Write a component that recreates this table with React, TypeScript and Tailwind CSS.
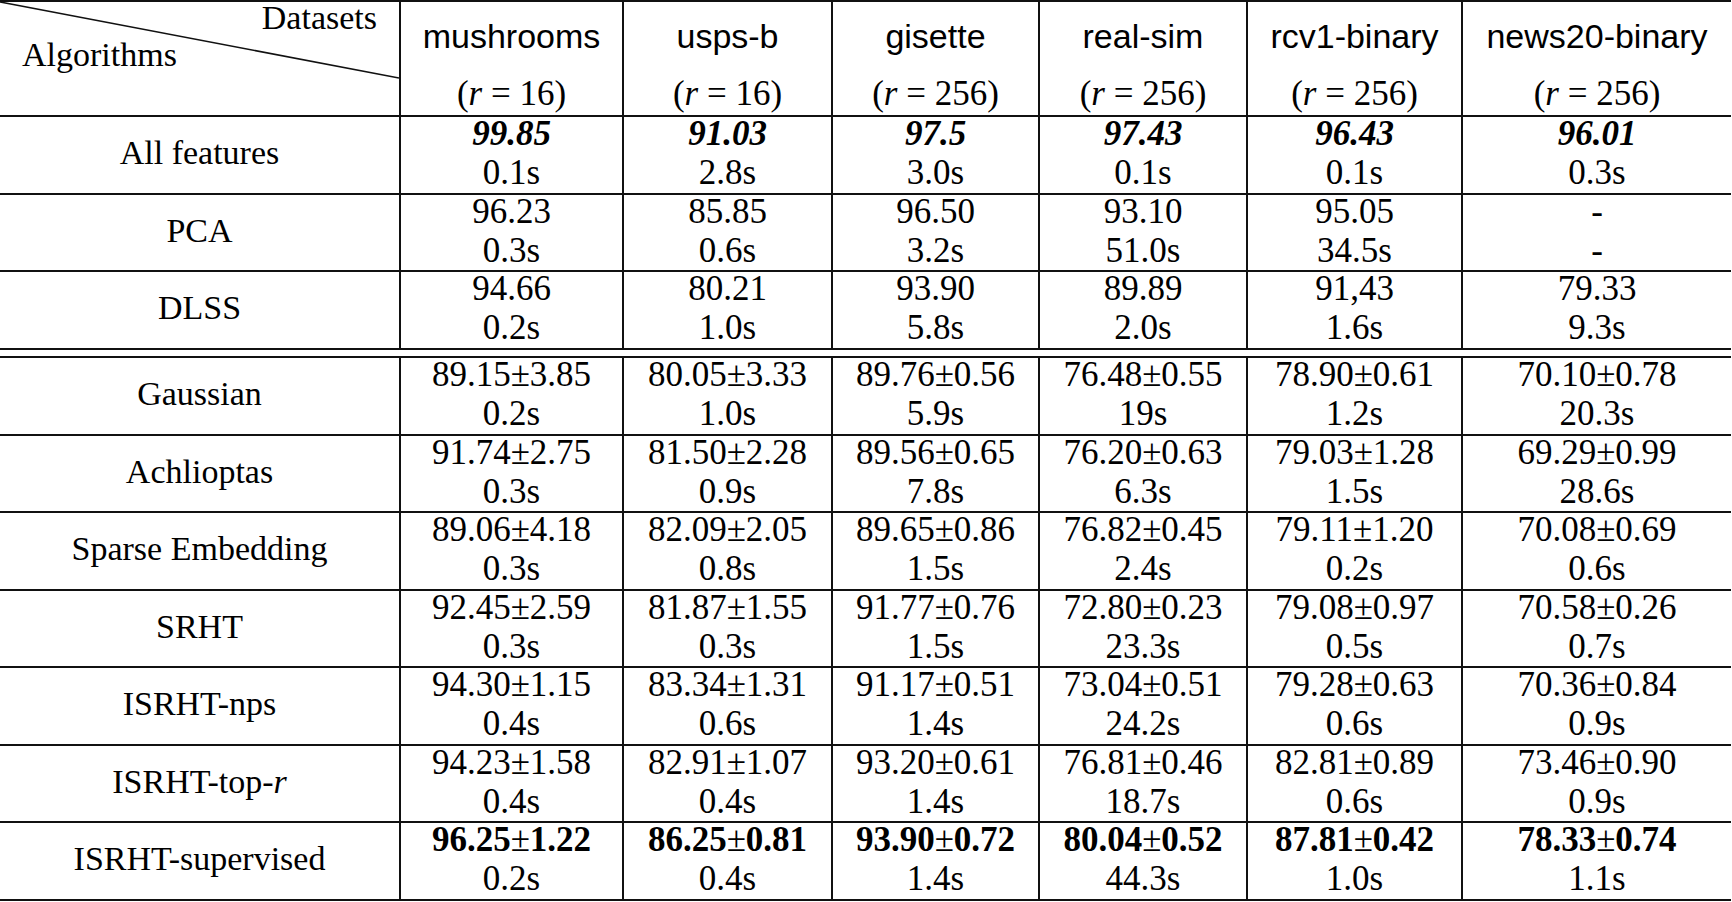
import React from "react";

type Cell = { v: string; t: string };

const datasets = [
  { name: "mushrooms", r: "16" },
  { name: "usps-b", r: "16" },
  { name: "gisette", r: "256" },
  { name: "real-sim", r: "256" },
  { name: "rcv1-binary", r: "256" },
  { name: "news20-binary", r: "256" },
];

const c = (v: string, t: string): Cell => ({ v, t });

const topRows: { name: string; cells: Cell[]; best?: boolean }[] = [
  {
    name: "All features",
    best: true,
    cells: [c("99.85", "0.1s"), c("91.03", "2.8s"), c("97.5", "3.0s"), c("97.43", "0.1s"), c("96.43", "0.1s"), c("96.01", "0.3s")],
  },
  {
    name: "PCA",
    cells: [c("96.23", "0.3s"), c("85.85", "0.6s"), c("96.50", "3.2s"), c("93.10", "51.0s"), c("95.05", "34.5s"), c("-", "-")],
  },
  {
    name: "DLSS",
    cells: [c("94.66", "0.2s"), c("80.21", "1.0s"), c("93.90", "5.8s"), c("89.89", "2.0s"), c("91,43", "1.6s"), c("79.33", "9.3s")],
  },
];

const bottomRows: { name: React.ReactNode; cells: Cell[]; bold?: boolean }[] = [
  {
    name: "Gaussian",
    cells: [c("89.15±3.85", "0.2s"), c("80.05±3.33", "1.0s"), c("89.76±0.56", "5.9s"), c("76.48±0.55", "19s"), c("78.90±0.61", "1.2s"), c("70.10±0.78", "20.3s")],
  },
  {
    name: "Achlioptas",
    cells: [c("91.74±2.75", "0.3s"), c("81.50±2.28", "0.9s"), c("89.56±0.65", "7.8s"), c("76.20±0.63", "6.3s"), c("79.03±1.28", "1.5s"), c("69.29±0.99", "28.6s")],
  },
  {
    name: "Sparse Embedding",
    cells: [c("89.06±4.18", "0.3s"), c("82.09±2.05", "0.8s"), c("89.65±0.86", "1.5s"), c("76.82±0.45", "2.4s"), c("79.11±1.20", "0.2s"), c("70.08±0.69", "0.6s")],
  },
  {
    name: "SRHT",
    cells: [c("92.45±2.59", "0.3s"), c("81.87±1.55", "0.3s"), c("91.77±0.76", "1.5s"), c("72.80±0.23", "23.3s"), c("79.08±0.97", "0.5s"), c("70.58±0.26", "0.7s")],
  },
  {
    name: "ISRHT-nps",
    cells: [c("94.30±1.15", "0.4s"), c("83.34±1.31", "0.6s"), c("91.17±0.51", "1.4s"), c("73.04±0.51", "24.2s"), c("79.28±0.63", "0.6s"), c("70.36±0.84", "0.9s")],
  },
  {
    name: (
      <>
        ISRHT-top-<i>r</i>
      </>
    ),
    cells: [c("94.23±1.58", "0.4s"), c("82.91±1.07", "0.4s"), c("93.20±0.61", "1.4s"), c("76.81±0.46", "18.7s"), c("82.81±0.89", "0.6s"), c("73.46±0.90", "0.9s")],
  },
  {
    name: "ISRHT-supervised",
    bold: true,
    cells: [c("96.25±1.22", "0.2s"), c("86.25±0.81", "0.4s"), c("93.90±0.72", "1.4s"), c("80.04±0.52", "44.3s"), c("87.81±0.42", "1.0s"), c("78.33±0.74", "1.1s")],
  },
];

const grid = "grid grid-cols-[399px_223px_209px_207px_208px_215px_270px] border-b-2 border-[#111]";
const cellBorder = "border-l-2 border-[#111]";

function BoldPm({ v }: { v: string }) {
  const [a, b] = v.split("±");
  if (b === undefined) return <span className="font-bold">{v}</span>;
  return (
    <>
      <span className="font-bold">{a}</span>±<span className="font-bold">{b}</span>
    </>
  );
}

function ValueCell({ cell, mode }: { cell: Cell; mode?: "bi" | "b" }) {
  return (
    <div className={`${cellBorder} flex flex-col items-center text-[35px] leading-[39px] whitespace-nowrap`}>
      <div className="-mt-[3px]">
        {mode === "bi" ? (
          <span className="font-bold italic">{cell.v}</span>
        ) : mode === "b" ? (
          <BoldPm v={cell.v} />
        ) : (
          cell.v
        )}
      </div>
      <div>{cell.t}</div>
    </div>
  );
}

function NameCell({ children }: { children: React.ReactNode }) {
  return (
    <div className="flex items-center justify-center pb-[4px] text-[34px] leading-[38px] whitespace-nowrap">{children}</div>
  );
}

export default function App() {
  return (
    <div
      className="w-[1731px] bg-white text-black"
      style={{ fontFamily: '"Liberation Serif", "Times New Roman", serif' }}
    >
      <div className="border-t-2 border-[#111]">
        {/* header */}
        <div className={`${grid} h-[115px]`}>
          <div className="relative flex flex-col text-[34px] leading-[34px]">
            <svg className="absolute inset-0" width="399" height="113" viewBox="0 0 399 113">
              <line x1="0" y1="0" x2="399" y2="76" stroke="#111" strokeWidth="1.6" />
            </svg>
            <div className="-mt-[1px] pr-[22px] text-right">Datasets</div>
            <div className="mt-[3px] pl-[22px]">Algorithms</div>
          </div>
          {datasets.map((d) => (
            <div key={d.name} className={`${cellBorder} flex flex-col items-center pt-[15px]`}>
              <div
                className="text-[34px] leading-[38px] whitespace-nowrap"
                style={{ fontFamily: '"Liberation Sans", Arial, sans-serif' }}
              >
                {d.name}
              </div>
              <div className="mt-[20px] text-[35px] leading-[38px] whitespace-nowrap">
                (<i>r</i> = {d.r})
              </div>
            </div>
          ))}
        </div>

        {topRows.map((row, i) => (
          <div key={row.name} className={`${grid} ${i === 1 ? "h-[77px]" : "h-[78px]"}`}>
            <NameCell>{row.name}</NameCell>
            {row.cells.map((cell, j) => (
              <ValueCell key={j} cell={cell} mode={row.best ? "bi" : undefined} />
            ))}
          </div>
        ))}

        {/* double rule */}
        <div className="h-[8px] border-b-2 border-[#111]" />

        {bottomRows.map((row, i) => (
          <div key={i} className={`${grid} ${i % 2 === 1 ? "h-[77px]" : "h-[78px]"}`}>
            <NameCell>{row.name}</NameCell>
            {row.cells.map((cell, j) => (
              <ValueCell key={j} cell={cell} mode={row.bold ? "b" : undefined} />
            ))}
          </div>
        ))}
      </div>
    </div>
  );
}
